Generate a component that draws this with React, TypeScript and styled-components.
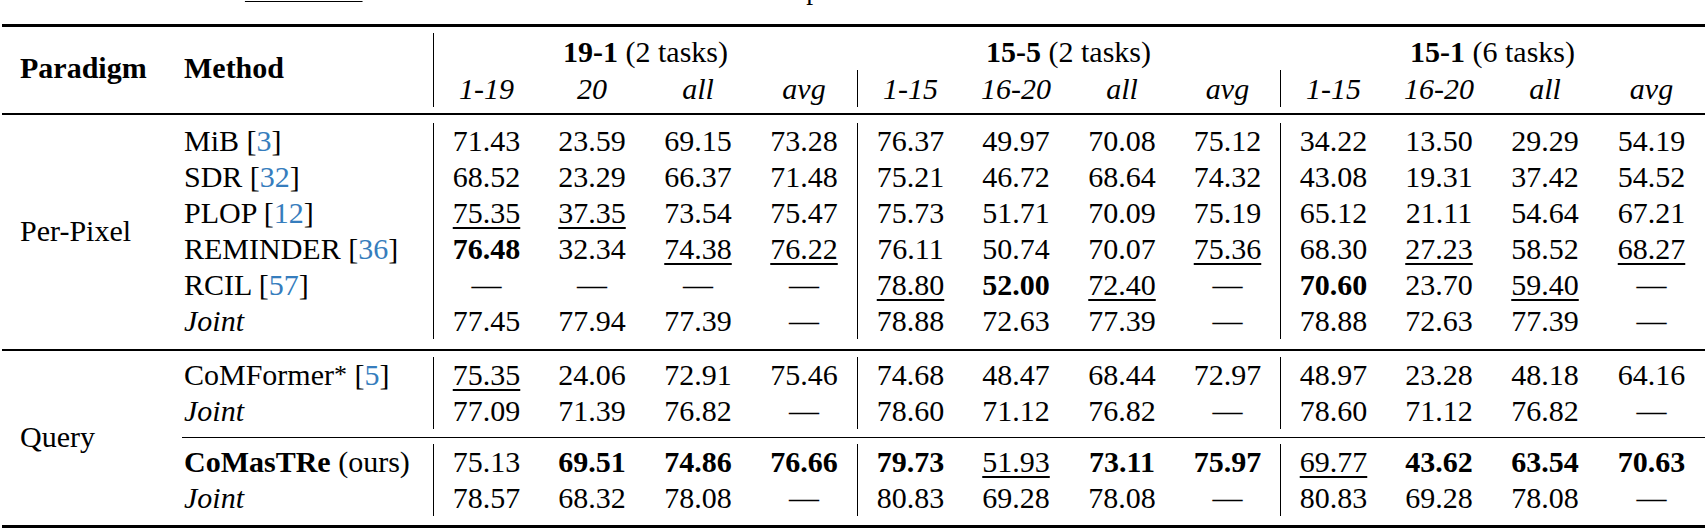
import * as React from 'react';
import styled, { createGlobalStyle } from 'styled-components';

const GlobalStyle = createGlobalStyle`
    html, body {
        margin: 0;
        padding: 0;
        background: #fff;
    }
    body {
        font-family: "Liberation Serif", "Times New Roman", serif;
        color: #000;
    }
`;

const Page = styled.div`
    width: 1707px;
    height: 528px;
    padding-left: 2px;
    box-sizing: border-box;
    overflow: hidden;
`;

// only the bottom of the caption's last line shows above the table
const CaptionClip = styled.div`
    height: 24px;
    overflow: hidden;
`;

const Caption = styled.p`
    display: flex;
    margin: -24px 0 0 -19px;
    font-size: 27.5px;
    line-height: 27.5px;
    white-space: nowrap;
    & u {
        text-decoration-thickness: 1px;
        text-underline-offset: 2px;
    }
`;

const CaptionLead = styled.span`
    flex: 0 0 784px;
`;

const Table = styled.table`
    width: 1703px;
    table-layout: fixed;
    border-collapse: separate;
    border-spacing: 0;
    font-size: 30px;
    line-height: 36px;
`;

const RuleCell = styled.td<{ $above: number; $below: number; $trim?: number }>`
    padding: ${p => p.$above}px 0 ${p => p.$below}px ${p => p.$trim ?? 0}px;
    font-size: 0;
    line-height: 0;
`;

const Rule = styled.div<{ $weight: number }>`
    height: ${p => p.$weight}px;
    background: #000;
`;

const HeadLabel = styled.th`
    padding: 0 0 4px 18px;
    text-align: left;
    vertical-align: middle;
    font-weight: bold;
    white-space: nowrap;
`;

const GroupHead = styled.th<{ $sep?: boolean }>`
    height: 37px;
    padding: 0;
    line-height: 37px;
    text-align: center;
    font-weight: normal;
    white-space: nowrap;
    border-left: ${p => (p.$sep ? '1px solid #000' : '0')};
`;

const SubHead = styled(GroupHead)`
    font-style: italic;
`;

const ParadigmCell = styled.td`
    padding: 0 0 0 18px;
    text-align: left;
    vertical-align: middle;
    white-space: nowrap;
`;

const MethodCell = styled.td`
    height: 36px;
    padding: 0 0 0 18px;
    text-align: left;
    white-space: nowrap;
`;

const ScoreCell = styled.td<{ $sep?: boolean }>`
    padding: 0;
    text-align: center;
    white-space: nowrap;
    border-left: ${p => (p.$sep ? '1px solid #000' : '0')};
`;

const Score = styled.span<{ $bold?: boolean; $under?: boolean }>`
    font-weight: ${p => (p.$bold ? 'bold' : 'normal')};
    text-decoration: ${p => (p.$under ? 'underline' : 'none')};
    text-decoration-thickness: 1.5px;
    text-underline-offset: 4px;
`;

const Cite = styled.span`
    color: rgb(54, 125, 189);
`;

const Star = styled.span`
    font-size: 26px;
    vertical-align: 2px;
    line-height: 0;
`;

const Em = styled.span`
    font-style: italic;
`;

const colWidths = [164, 267, 106, 106, 106, 106, 106, 106, 106, 105, 106, 106, 106, 107];

const groups = [
    { name: '19-1', tasks: '2 tasks', cols: ['1-19', '20', 'all', 'avg'] },
    { name: '15-5', tasks: '2 tasks', cols: ['1-15', '16-20', 'all', 'avg'] },
    { name: '15-1', tasks: '6 tasks', cols: ['1-15', '16-20', 'all', 'avg'] },
];

type Row = { method: React.ReactNode; scores: string[] };

const ref = (name: React.ReactNode, n: number) => (
    <>
        {name} [<Cite>{n}</Cite>]
    </>
);

const joint = <Em>Joint</Em>;

// '*' = best (bold), '_' = second best (underlined), '-' = not reported
const perPixel: Row[] = [
    { method: ref('MiB', 3), scores: ['71.43', '23.59', '69.15', '73.28', '76.37', '49.97', '70.08', '75.12', '34.22', '13.50', '29.29', '54.19'] },
    { method: ref('SDR', 32), scores: ['68.52', '23.29', '66.37', '71.48', '75.21', '46.72', '68.64', '74.32', '43.08', '19.31', '37.42', '54.52'] },
    { method: ref('PLOP', 12), scores: ['_75.35', '_37.35', '73.54', '75.47', '75.73', '51.71', '70.09', '75.19', '65.12', '21.11', '54.64', '67.21'] },
    { method: ref('REMINDER', 36), scores: ['*76.48', '32.34', '_74.38', '_76.22', '76.11', '50.74', '70.07', '_75.36', '68.30', '_27.23', '58.52', '_68.27'] },
    { method: ref('RCIL', 57), scores: ['-', '-', '-', '-', '_78.80', '*52.00', '_72.40', '-', '*70.60', '23.70', '_59.40', '-'] },
    { method: joint, scores: ['77.45', '77.94', '77.39', '-', '78.88', '72.63', '77.39', '-', '78.88', '72.63', '77.39', '-'] },
];

const queryPrior: Row[] = [
    { method: ref(<>CoMFormer<Star>*</Star></>, 5), scores: ['_75.35', '24.06', '72.91', '75.46', '74.68', '48.47', '68.44', '72.97', '48.97', '23.28', '48.18', '64.16'] },
    { method: joint, scores: ['77.09', '71.39', '76.82', '-', '78.60', '71.12', '76.82', '-', '78.60', '71.12', '76.82', '-'] },
];

const queryOurs: Row[] = [
    { method: <><b>CoMasTRe</b> (ours)</>, scores: ['75.13', '*69.51', '*74.86', '*76.66', '*79.73', '_51.93', '*73.11', '*75.97', '_69.77', '*43.62', '*63.54', '*70.63'] },
    { method: joint, scores: ['78.57', '68.32', '78.08', '-', '80.83', '69.28', '78.08', '-', '80.83', '69.28', '78.08', '-'] },
];

const renderScore = (raw: string, i: number) => {
    const bold = raw.startsWith('*');
    const under = raw.startsWith('_');
    const text = bold || under ? raw.slice(1) : raw;
    return (
        <ScoreCell key={i} $sep={i % 4 === 0}>
            <Score $bold={bold} $under={under}>{text === '-' ? '—' : text}</Score>
        </ScoreCell>
    );
};

const RuleRow: React.FC<{ above: number; below: number; weight: number; trim?: boolean }> = ({ above, below, weight, trim }) => (
    <tr>
        {trim ? (
            <RuleCell colSpan={13} $above={above} $below={below} $trim={16}>
                <Rule $weight={weight} />
            </RuleCell>
        ) : (
            <RuleCell colSpan={14} $above={above} $below={below}>
                <Rule $weight={weight} />
            </RuleCell>
        )}
    </tr>
);

const App: React.FC = () => {
    return <Page>
        <GlobalStyle />
        <CaptionClip>
            <Caption>
                <CaptionLead>and the second best are <u>underlined</u>. Each score is the mIoU after the last</CaptionLead>
                <span>step.</span>
            </Caption>
        </CaptionClip>
        <Table>
            <colgroup>
                {colWidths.map((w, i) => <col key={i} style={{ width: w }} />)}
            </colgroup>
            <thead>
                <RuleRow above={0} below={6} weight={3} />
                <tr>
                    <HeadLabel rowSpan={2}>Paradigm</HeadLabel>
                    <HeadLabel rowSpan={2}>Method</HeadLabel>
                    {groups.map((g, i) => (
                        <GroupHead key={g.name} colSpan={4} $sep={i === 0}>
                            <b>{g.name}</b> ({g.tasks})
                        </GroupHead>
                    ))}
                </tr>
                <tr>
                    {groups.map(g => g.cols.map((c, j) => (
                        <SubHead key={g.name + c} $sep={j === 0}>{c}</SubHead>
                    )))}
                </tr>
                <RuleRow above={6} below={8} weight={2} />
            </thead>
            <tbody>
                {perPixel.map((r, i) => (
                    <tr key={'pp' + i}>
                        {i === 0 && <ParadigmCell rowSpan={perPixel.length}>Per-Pixel</ParadigmCell>}
                        <MethodCell>{r.method}</MethodCell>
                        {r.scores.map(renderScore)}
                    </tr>
                ))}
                <RuleRow above={10} below={6} weight={2} />
                {queryPrior.map((r, i) => (
                    <tr key={'qp' + i}>
                        {i === 0 && <ParadigmCell rowSpan={5}>Query</ParadigmCell>}
                        <MethodCell>{r.method}</MethodCell>
                        {r.scores.map(renderScore)}
                    </tr>
                ))}
                <RuleRow above={8} below={6} weight={1} trim />
                {queryOurs.map((r, i) => (
                    <tr key={'qo' + i}>
                        <MethodCell>{r.method}</MethodCell>
                        {r.scores.map(renderScore)}
                    </tr>
                ))}
                <RuleRow above={9} below={0} weight={3} />
            </tbody>
        </Table>
    </Page>
}

export default App;
